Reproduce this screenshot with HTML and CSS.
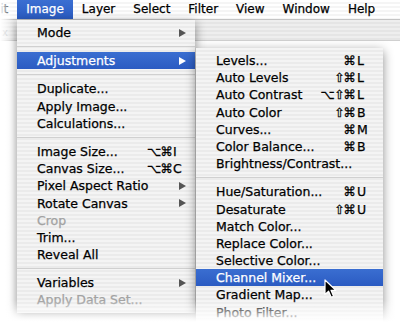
FILE: index.html
```html
<!DOCTYPE html>
<html>
<head>
    <meta charset="utf-8">
    <link rel="stylesheet" href="styles.css">
</head>
<body>
    <div class="screen">
        <div class="menubar">
            <span class="bar-item">Edit</span>
            <span class="bar-item open">Image</span>
            <span class="bar-item">Layer</span>
            <span class="bar-item">Select</span>
            <span class="bar-item">Filter</span>
            <span class="bar-item">View</span>
            <span class="bar-item">Window</span>
            <span class="bar-item">Help</span>
        </div>
        <div class="options"><span class="field">x</span></div>

        <!-- Image menu -->
        <div class="menu main-menu">
            <div class="item"><span class="label">Mode</span><span class="key"><span class="arrow"></span></span></div>
            <div class="sep"></div>
            <div class="item sel"><span class="label">Adjustments</span><span class="key"><span class="arrow"></span></span></div>
            <div class="sep"></div>
            <div class="item"><span class="label">Duplicate...</span></div>
            <div class="item"><span class="label">Apply Image...</span></div>
            <div class="item"><span class="label">Calculations...</span></div>
            <div class="sep"></div>
            <div class="item"><span class="label">Image Size...</span><span class="mods">⌥⌘</span><span class="key">I</span></div>
            <div class="item"><span class="label">Canvas Size...</span><span class="mods">⌥⌘</span><span class="key">C</span></div>
            <div class="item"><span class="label">Pixel Aspect Ratio</span><span class="key"><span class="arrow"></span></span></div>
            <div class="item"><span class="label">Rotate Canvas</span><span class="key"><span class="arrow"></span></span></div>
            <div class="item off"><span class="label">Crop</span></div>
            <div class="item"><span class="label">Trim...</span></div>
            <div class="item"><span class="label">Reveal All</span></div>
            <div class="sep"></div>
            <div class="item"><span class="label">Variables</span><span class="key"><span class="arrow"></span></span></div>
            <div class="item off"><span class="label">Apply Data Set...</span></div>
        </div>

        <!-- Adjustments submenu -->
        <div class="menu sub-menu">
            <div class="item"><span class="label">Levels...</span><span class="mods">⌘</span><span class="key">L</span></div>
            <div class="item"><span class="label">Auto Levels</span><span class="mods">⇧⌘</span><span class="key">L</span></div>
            <div class="item"><span class="label">Auto Contrast</span><span class="mods">⌥⇧⌘</span><span class="key">L</span></div>
            <div class="item"><span class="label">Auto Color</span><span class="mods">⇧⌘</span><span class="key">B</span></div>
            <div class="item"><span class="label">Curves...</span><span class="mods">⌘</span><span class="key">M</span></div>
            <div class="item"><span class="label">Color Balance...</span><span class="mods">⌘</span><span class="key">B</span></div>
            <div class="item"><span class="label">Brightness/Contrast...</span></div>
            <div class="sep"></div>
            <div class="item"><span class="label">Hue/Saturation...</span><span class="mods">⌘</span><span class="key">U</span></div>
            <div class="item"><span class="label">Desaturate</span><span class="mods">⇧⌘</span><span class="key">U</span></div>
            <div class="item"><span class="label">Match Color...</span></div>
            <div class="item"><span class="label">Replace Color...</span></div>
            <div class="item"><span class="label">Selective Color...</span></div>
            <div class="item sel"><span class="label">Channel Mixer...</span></div>
            <div class="item"><span class="label">Gradient Map...</span></div>
            <div class="item"><span class="label">Photo Filter...</span></div>
        </div>

        <svg class="cursor" width="14" height="20" viewBox="0 0 14 20">
            <path d="M1 1 L1 15.5 L4.6 12.2 L7.2 18.2 L9.6 17.2 L7 11.3 L11.8 11.3 Z" fill="#000" stroke="#fff" stroke-width="1.2" stroke-linejoin="round"/>
        </svg>

        <div class="fade-left"></div>
        <div class="fade-bottom"></div>
    </div>
</body>
</html>
```

FILE: styles.css
```css
body {
    margin: 0;
    background: #fff;
    font-family: "DejaVu Sans", "Liberation Sans", sans-serif;
}

.screen {
    position: relative;
    width: 400px;
    height: 322px;
    overflow: hidden;
}

/* menu bar */
.menubar {
    display: flex;
    height: 19px;
    line-height: 18px;
    margin-left: -24px;
    font-size: 12px;
    color: #000;
    -webkit-text-stroke: 0.25px currentColor;
    background: repeating-linear-gradient(#ffffff 0 2px, #f5f5f5 2px 4px);
    border-bottom: 1px solid #c4c4c4;
    white-space: nowrap;
}

.bar-item {
    padding: 0 9px;
}

.bar-item.open {
    color: #fff;
    background: linear-gradient(#3b6fd2, #2a5bc1);
}

.options {
    height: 20px;
    line-height: 26px;
    padding-left: 2px;
    font-size: 10px;
    color: #b0b0b0;
    background: repeating-linear-gradient(#eeeeee 0 2px, #e5e5e5 2px 4px);
    border-bottom: 1px solid #d0d0d0;
    overflow: hidden;
}

/* dropdown menus */
.menu {
    position: absolute;
    padding: 4px 0;
    font-size: 12.5px;
    line-height: 17.2px;
    background: repeating-linear-gradient(#f4f4f4 0 2px, #ebebeb 2px 4px);
    box-shadow: 0 3px 10px rgba(0, 0, 0, 0.45);
}

.main-menu {
    left: 17px;
    top: 20px;
    width: 178px;
}

.sub-menu {
    left: 196px;
    top: 48px;
    width: 187px;
}

.item {
    display: flex;
    align-items: center;
    height: 17.2px;
    padding: 0 9px 0 20px;
    color: #000;
    -webkit-text-stroke: 0.25px currentColor;
    white-space: nowrap;
}

.item.sel {
    color: #fff;
    background: linear-gradient(#3a6ed1, #2b5bc2);
}

.item.off {
    color: #a2a2a2;
}

.label {
    flex: 1;
}

.mods {
    text-align: right;
    letter-spacing: -1px;
}

.key {
    display: flex;
    align-items: center;
}

.main-menu .mods {
    margin-right: 1px;
}

.main-menu .key {
    width: 13px;
}

.sub-menu .mods {
    margin-right: 2px;
}

.sub-menu .key {
    width: 17px;
}

.arrow {
    margin-left: auto;
    width: 0;
    height: 0;
    border-left: 7px solid #555;
    border-top: 4.5px solid transparent;
    border-bottom: 4.5px solid transparent;
}

.item.sel .arrow {
    border-left-color: #fff;
}

.sep {
    height: 11px;
    background: linear-gradient(transparent 5px, #d0d0d0 5px, #d0d0d0 6px, transparent 6px);
}

/* pointer over Channel Mixer */
.cursor {
    position: absolute;
    left: 324px;
    top: 279px;
}

/* soft edges of the cropped screenshot */
.fade-left {
    position: absolute;
    left: 0;
    top: 0;
    bottom: 0;
    width: 14px;
    background: linear-gradient(to right, #fff, rgba(255, 255, 255, 0));
}

.fade-bottom {
    position: absolute;
    left: 0;
    right: 0;
    bottom: 0;
    height: 22px;
    background: linear-gradient(rgba(255, 255, 255, 0), #fff);
}
```
